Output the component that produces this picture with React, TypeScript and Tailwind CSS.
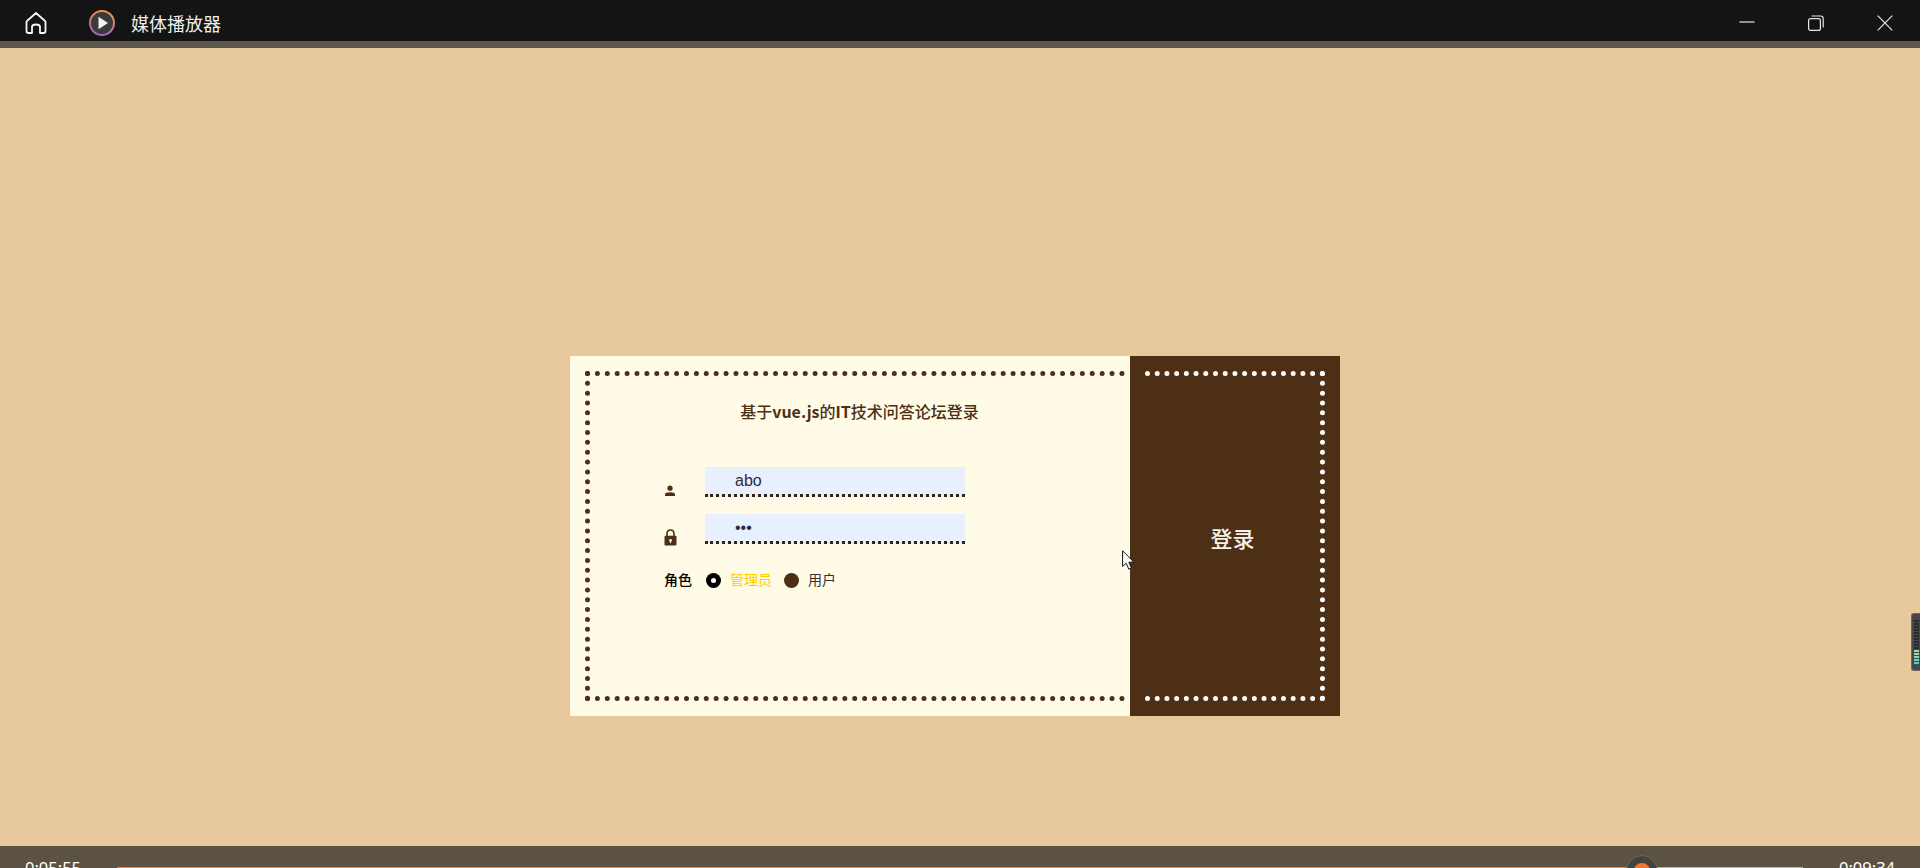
const cjk = "font-['Noto_Sans_CJK_SC','Noto_Sans',sans-serif]";

function HomeIcon() {
  return (
    <svg width="24" height="24" viewBox="0 0 24 24" fill="none" stroke="#f5f5f5" strokeWidth="1.8" strokeLinejoin="round">
      <path d="M12 2 L3.2 9.7 Q2.5 10.3 2.5 11.3 V20 Q2.5 22 4.5 22 H8 V16 Q8 13.5 12 13.5 Q16 13.5 16 16 V22 H19.5 Q21.5 22 21.5 20 V11.3 Q21.5 10.3 20.8 9.7 Z" />
    </svg>
  );
}

function PlayerLogo() {
  return (
    <svg width="26" height="26" viewBox="0 0 26 26">
      <defs>
        <linearGradient id="ring" x1="0.7" y1="0" x2="0.4" y2="1">
          <stop offset="0" stopColor="#f59443" />
          <stop offset="1" stopColor="#a060c8" />
        </linearGradient>
      </defs>
      <circle cx="13" cy="13" r="12" fill="#3a3a3a" stroke="url(#ring)" strokeWidth="2" />
      <path d="M9.5 6.8 L19 13 L9.5 19.2 Z" fill="#f2f2f2" />
    </svg>
  );
}

function WindowControls() {
  return (
    <div className="ml-auto flex items-center">
      <svg width="16" height="16" viewBox="0 0 16 16" stroke="#e8e8e8" strokeWidth="1.2" className="mr-[53px] translate-y-[-1px]">
        <path d="M0.5 8 H15.5" />
      </svg>
      <svg width="16" height="16" viewBox="0 0 16 16" fill="none" stroke="#e8e8e8" strokeWidth="1.2" className="mr-[53px]">
        <rect x="0.6" y="3.6" width="11.8" height="11.8" rx="2" />
        <path d="M3.5 1 H12.5 Q15.2 1 15.2 3.7 V12.5" />
      </svg>
      <svg width="16" height="16" viewBox="0 0 16 16" stroke="#e8e8e8" strokeWidth="1.2" className="mr-[27px]">
        <path d="M0.7 0.7 L15.3 15.3 M15.3 0.7 L0.7 15.3" />
      </svg>
    </div>
  );
}

function UserIcon() {
  return (
    <svg width="12" height="12" viewBox="0 0 12 12" fill="#4c2f14">
      <circle cx="6" cy="3.2" r="2.6" />
      <path d="M1 11 V9.6 Q1 7.2 6 7.2 Q11 7.2 11 9.6 V11 Z" />
    </svg>
  );
}

function LockIcon() {
  return (
    <svg width="13" height="17" viewBox="0 0 13 17">
      <path d="M3 8 V4.8 Q3 1 6.5 1 Q10 1 10 4.8 V8" fill="none" stroke="#4c2f14" strokeWidth="1.6" />
      <rect x="0.5" y="6.8" width="12" height="9.7" rx="1.3" fill="#4c2f14" />
      <circle cx="6.5" cy="11.4" r="1.4" fill="#fffbe6" />
      <rect x="6" y="11.5" width="1" height="2.6" fill="#fffbe6" />
    </svg>
  );
}

function Field({ type, icon, iconClass }: { type: string; icon: React.ReactNode; iconClass: string }) {
  return (
    <div className="flex items-center">
      <div className={`flex w-[41px] items-center ${iconClass}`}>{icon}</div>
      <input
        readOnly
        type={type}
        value="abo"
        className="h-[30px] w-[260px] border-b-[3px] border-dotted border-[#33241a] bg-[#e8f0fe] pl-[30px] font-['Liberation_Sans',sans-serif] text-[16px] text-[#2b2b3a] outline-none"
      />
    </div>
  );
}

function LoginCard() {
  return (
    <div className="flex h-[360px] w-[770px]">
      <div className="h-full w-[560px] bg-[#fffbe6] py-[15px] pl-[15px] pr-[5px]">
        <div className="h-full border-y-[5px] border-l-[5px] border-dotted border-[#4c2f14] pl-[74px]">
          <h1 className={`mb-[44px] ml-[-70px] pt-[23px] text-center text-[16px] leading-[24px] font-medium text-[#4c2f14] ${cjk}`}>
            基于<span className="font-bold">vue.js</span>的<span className="font-bold">IT</span>技术问答论坛登录
          </h1>
          <div className="flex flex-col gap-[17px]">
            <Field type="text" icon={<UserIcon />} iconClass="translate-y-[9px]" />
            <Field type="password" icon={<LockIcon />} iconClass="translate-y-[8px]" />
          </div>
          <div className={`mt-[26px] flex items-center text-[14px] leading-[20px] ${cjk}`}>
            <span className="w-[42px] -translate-y-px font-medium text-black">角色</span>
            <span className="flex h-[15px] w-[15px] items-center justify-center rounded-full bg-black">
              <span className="h-[5px] w-[5px] rounded-full bg-white" />
            </span>
            <span className="ml-[9px] -translate-y-px text-[#ffcc00]">管理员</span>
            <span className="ml-[12px] h-[15px] w-[15px] rounded-full bg-[#4c2f14]" />
            <span className="ml-[9px] -translate-y-px text-[#333333]">用户</span>
          </div>
        </div>
      </div>
      <div className="h-full w-[210px] bg-[#4c2f14] p-[15px]">
        <div className="flex h-full items-center justify-center border-y-[5px] border-r-[5px] border-dotted border-white">
          <button className={`pt-[2px] text-[22px] leading-[30px] font-medium text-[#f7f3ea] ${cjk}`}>登录</button>
        </div>
      </div>
    </div>
  );
}

const levelBars = ['#2b2b2d', '#2b2b2d', '#2b2b2d', '#2b2b2d', '#2b2b2d', '#2b2b2d', '#2b2b2d', '#2b2b2d', '#2b2b2d', '#2b2b2d', '#a5d6a0', '#9ad6a8', '#8ad8b0', '#6fd0b8', '#5cc8c0'];

export default function App() {
  return (
    <div className="relative flex h-screen flex-col overflow-hidden bg-[#e8c99e]">
      <header className="flex h-[41px] shrink-0 items-center bg-[#141414] pl-[24px] pt-[5px]">
        <HomeIcon />
        <div className="ml-[41px]">
          <PlayerLogo />
        </div>
        <span className={`ml-[16px] text-[18px] text-[#eeeeee] ${cjk}`}>媒体播放器</span>
        <WindowControls />
      </header>
      <div className="h-[7px] shrink-0 bg-[#5c564b]" />

      <main className="flex-1 pl-[570px] pt-[308px]">
        <LoginCard />
      </main>

      <footer className="relative h-[24px] shrink-0 border-t-2 border-[#e3c69d] bg-[#5b5243]">
        <div className="flex h-full items-start font-['Noto_Sans',sans-serif] text-[16.5px] leading-[22px] text-white">
          <span className="w-[117px] pl-[25px] pt-[11px]">0:05:55</span>
          <div className="mt-[21px] h-[3px] w-[1525px] bg-[#f08543]" />
          <div className="mt-[21px] h-[3px] w-[161px] bg-[#b9b5a8]" />
          <span className="pl-[36px] pt-[11px]">0:09:34</span>
        </div>
        <div className="absolute left-[1626px] top-[9px] flex h-[32px] w-[32px] items-center justify-center rounded-full border border-[#6e6758] bg-[#454341]">
          <div className="h-[16px] w-[16px] rounded-full bg-[#f5772a]" />
        </div>
      </footer>

      <div className="absolute right-0 top-[613px] flex h-[58px] w-[9px] flex-col items-center justify-center gap-px rounded-l-[3px] border-y border-l border-[#6a6a6a] bg-[#47474b] pl-px">
        {levelBars.map((color, i) => (
          <div key={i} className="h-[2px] w-[5px]" style={{ backgroundColor: color }} />
        ))}
      </div>

      <svg className="absolute left-[1122px] top-[550px]" width="13" height="20" viewBox="0 0 13 20">
        <path d="M0.6 0.8 V16.4 L4.2 13.2 L6.8 19.2 L9.4 18 L6.8 12.2 L11.8 12 Z" fill="#ffffff" stroke="#111111" strokeWidth="1" strokeLinejoin="round" />
      </svg>
    </div>
  );
}
